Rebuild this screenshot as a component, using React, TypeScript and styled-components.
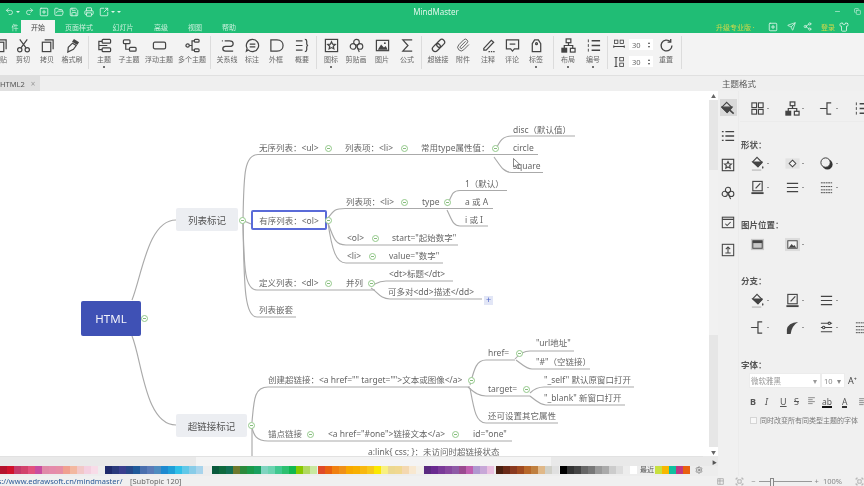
import React from "react";
import styled, { createGlobalStyle } from "styled-components";
import { Paperclip, Undo2, Redo2, SquarePlus, FolderOpen, Save, Printer, SquareArrowOutUpRight, Send, Share2, Shirt, Minus, Copy as CopyIcon, Settings } from "lucide-react";

const Global = createGlobalStyle`
  html, body { margin: 0; padding: 0; background: #fff; overflow: hidden; }
  #root { width: 864px; height: 486px; }
`;

const FONT = `"Noto Sans", "Noto Sans CJK SC", sans-serif`;

const Page = styled.div`
  width: 864px; height: 486px; display: flex; flex-direction: column; overflow: hidden;
  font-family: ${FONT}; color: #555; background: #f1f1f1; filter: blur(0.35px);
`;
const BlackBar = styled.div`height: 3px; background: #000; flex: none;`;
const TitleBar = styled.div`
  height: 17px; flex: none; background: #20bd75; display: grid; grid-template-columns: 1fr auto 1fr;
  align-items: center; color: #dff6ea;
`;
const QuickTools = styled.div`display: flex; align-items: center; gap: 5px; padding-left: 5px;`;
const Caret = styled.span`width: 0; height: 0; border-left: 2px solid transparent; border-right: 2px solid transparent; border-top: 2px solid #dff6ea; margin-left: -3px;`;
const AppName = styled.div`font-size: 8px; margin-left: 8px;`;
const WindowControls = styled.div`display: flex; justify-content: flex-end; gap: 13px; padding-right: 3px; align-items: center;`;
const TabBar = styled.div`height: 13px; flex: none; background: #20bd75; display: flex; align-items: flex-end; position: relative;`;
const MenuTab = styled.div<{ $w: number; $active?: boolean }>`
  width: ${(p) => p.$w}px; height: 13px; display: flex; align-items: center; justify-content: center; font-size: 7px; white-space: nowrap;
  color: ${(p) => (p.$active ? "#444" : "#c9f0dc")}; background: ${(p) => (p.$active ? "#f4f4f4" : "transparent")};
`;
const TabRight = styled.div`margin-left: auto; display: flex; align-items: center; height: 13px; color: #dff6ea;`;
const Upgrade = styled.span<{ $w: number }>`font-size: 7px; color: #d3d84a; width: ${(p) => p.$w}px; white-space: nowrap;`;
const Ribbon = styled.div`
  height: 43px; flex: none; background: #f3f3f3; border-bottom: 1px solid #e0e0e0; box-sizing: border-box;
  display: flex; align-items: stretch; margin-left: -8px; width: 880px;
`;
const RibbonItem = styled.div<{ $w: number }>`
  width: ${(p) => p.$w}px; flex: none; display: flex; flex-direction: column; align-items: center; padding-top: 4px; box-sizing: border-box;
`;
const IconSlot = styled.div`height: 16px; display: flex; align-items: center; justify-content: center;`;
const RibbonLabel = styled.div`margin-top: 2px; height: 10px; line-height: 10px; font-size: 7px; color: #666; white-space: nowrap;`;
const DropDot = styled.div`width: 2px; height: 2px; background: #444; margin-top: 1px; border-radius: 50%;`;
const RibbonSep = styled.div<{ $l: number; $r: number }>`
  width: 1px; height: 33px; align-self: center; margin: -3px ${(p) => p.$r}px 0 ${(p) => p.$l}px; background: #dcdcdc; flex: none;
`;
const SpaceGroup = styled.div`display: flex; flex-direction: column; gap: 6px; width: 47px; padding-top: 6px; box-sizing: border-box; margin-left: 5px; flex: none;`;
const SpaceRow = styled.div`display: flex; align-items: center; gap: 3px; height: 11px;`;
const SpaceInput = styled.div`
  width: 24px; height: 11px; background: #fff; font-size: 7.5px; color: #666; display: flex; align-items: center; justify-content: space-between;
  padding: 0 3px; box-sizing: border-box; margin-left: 1px;
`;
const Spin = styled.span`
  display: flex; flex-direction: column; gap: 2px;
  &::before, &::after { content: ""; width: 0; height: 0; border-left: 1.5px solid transparent; border-right: 1.5px solid transparent; }
  &::before { border-bottom: 2px solid #444; }
  &::after { border-top: 2px solid #444; }
`;
const DocBar = styled.div`height: 15px; flex: none; background: #efefef; display: flex; align-items: stretch;`;
const DocTab = styled.div`width: 40px; background: #e0e0e0; display: flex; align-items: center; font-size: 7.5px; color: #555; gap: 6px; padding-left: 0; box-sizing: border-box;`;
const DocClose = styled.span`color: #999; font-size: 8px;`;
const PanelTitle = styled.div`margin-left: auto; width: 142px; font-size: 8.5px; line-height: 15px; color: #555;`;
const Main = styled.div`flex: 1; min-height: 0; display: flex;`;
const LeftColumn = styled.div`width: 718px; flex: none; display: flex; flex-direction: column;`;
const CanvasRow = styled.div`height: 365px; flex: none; display: flex;`;
const Canvas = styled.div`width: 709px; background: #fff; position: relative; overflow: hidden; flex: none;`;
const Edges = styled.svg`position: absolute; inset: 0; width: 709px; height: 365px;`;
const VScroll = styled.div`width: 9px; flex: none; display: flex; flex-direction: column; background: #f0f0f0;`;
const ScrollBtn = styled.div`height: 9px; background: #fff; color: #666; font-size: 5px; display: flex; align-items: center; justify-content: center; flex: none;`;
const ScrollTrack = styled.div<{ $h: number; $dark?: boolean }>`height: ${(p) => p.$h}px; flex: none; background: ${(p) => (p.$dark ? "#e6e6e6" : "#f1f1f1")};`;
const Root = styled.div`
  position: absolute; left: 81px; top: 209.5px; width: 60px; height: 35px; background: #3f51b5; border-radius: 2px;
  color: #f2f2fa; font-size: 11.5px; display: flex; align-items: center; justify-content: center;
`;
const Topic = styled.div<{ $x: number; $y: number; $w: number }>`
  position: absolute; left: ${(p) => p.$x}px; top: ${(p) => p.$y - 91}px; width: ${(p) => p.$w}px; height: 23px; background: #eceef2; border-radius: 2px;
  font-size: 9.5px; color: #555; display: flex; align-items: center; justify-content: center; white-space: nowrap;
`;
const Selected = styled.div`
  position: absolute; left: 251px; top: 119px; width: 76px; height: 20px; box-sizing: border-box; border: 2px solid #5a6bd8; border-radius: 2px;
  font-size: 8.5px; color: #666; display: flex; align-items: center; justify-content: center; white-space: nowrap; background: #fff;
`;
const Label = styled.div<{ $x: number; $y: number }>`
  position: absolute; left: ${(p) => p.$x}px; top: ${(p) => p.$y - 91}px; transform: translateY(-50%);
  font-size: 8.5px; line-height: 12px; color: #666; white-space: nowrap;
`;
const Toggle = styled.div<{ $x: number; $y: number }>`
  position: absolute; left: ${(p) => p.$x - 3.5}px; top: ${(p) => p.$y - 91 - 3.5}px; width: 7px; height: 7px; box-sizing: border-box;
  border: 1.2px solid #93c98a; border-radius: 50%; background: #fff; display: flex; align-items: center; justify-content: center;
  &::after { content: ""; width: 3px; height: 1px; background: #86bc7c; }
`;
const AddBtn = styled.div`
  position: absolute; left: 484px; top: 205px; width: 9px; height: 9px; background: #e2e6f6; color: #4f66c8; font-size: 9px; line-height: 8px; text-align: center;
`;
const Pointer = styled.svg`position: absolute; left: 513px; top: 67px; width: 8px; height: 11px;`;
const HScroll = styled.div`height: 10px; flex: none; display: flex;`;
const HSeg = styled.div<{ $w: number; $light?: boolean }>`width: ${(p) => p.$w}px; flex: none; background: ${(p) => (p.$light ? "#f4f4f4" : "#e9e9e9")}; border-top: 1px solid #e2e2e2; box-sizing: border-box;`;
const HArrow = styled.div`width: 15px; flex: none; background: #e9e9e9; color: #555; font-size: 5px; display: flex; align-items: center; justify-content: flex-end; padding-right: 1px; box-sizing: border-box;`;
const HCorner = styled.div`flex: 1; background: #fff;`;
const Palette = styled.div`height: 10px; flex: none; background: #ededed; display: flex; align-items: flex-start;`;
const Swatch = styled.div<{ $c: string }>`width: 7px; height: 8px; background: ${(p) => p.$c}; flex: none;`;
const SwatchGap = styled.div<{ $w: number }>`width: ${(p) => p.$w}px; flex: none;`;
const RecentLabel = styled.span`font-size: 7px; line-height: 8px; color: #555; width: 15px; flex: none;`;
const Panel = styled.div`width: 146px; flex: none; display: flex; background: #f0f0f0; overflow: hidden;`;
const Rail = styled.div`width: 20px; flex: none; border-right: 1px solid #ebebeb; display: flex; flex-direction: column; align-items: center; gap: 11.5px; padding-top: 8px; box-sizing: content-box;`;
const RailBtn = styled.div<{ $active?: boolean }>`width: 17px; height: 17px; display: flex; align-items: center; justify-content: center; background: ${(p) => (p.$active ? "#d9d9d9" : "transparent")}; flex: none;`;
const PanelBody = styled.div`flex: none; width: 130px; display: flex; flex-direction: column; padding-left: 1px; box-sizing: border-box;`;
const TopTools = styled.div`height: 31px; flex: none; padding-top: 8px; box-sizing: border-box; display: flex; border-bottom: 1px solid #ebebeb; width: 140px;`;
const ToolRow = styled.div<{ $mt: number }>`height: 18px; flex: none; margin-top: ${(p) => p.$mt}px; display: flex;`;
const Tool = styled.div`width: 34.5px; height: 18px; flex: none; display: flex; align-items: center; padding-left: 10px; box-sizing: border-box; gap: 2px;`;
const ToolIcon = styled.div`width: 15px; height: 15px; flex: none; display: flex; align-items: center; justify-content: center;`;
const Dash = styled.span`width: 2px; height: 1px; background: #999; flex: none;`;
const SectionTitle = styled.div<{ $mt: number }>`height: 14px; line-height: 14px; margin-top: ${(p) => p.$mt}px; margin-left: 1px; font-size: 8.5px; font-weight: 700; color: #555; flex: none;`;
const FontRow = styled.div`display: flex; margin: 1px 0 0 9px; height: 15px; align-items: stretch; flex: none;`;
const FontName = styled.div`width: 72px; background: #fff; color: #999; font-size: 7.5px; display: flex; align-items: center; justify-content: space-between; padding: 0 3px 0 1px; box-sizing: border-box; border: 1px solid #ececec;`;
const FontSize = styled.div`width: 24px; background: #fff; color: #888; font-size: 7.5px; display: flex; align-items: center; justify-content: space-between; padding: 0 3px 0 2px; box-sizing: border-box; border: 1px solid #ececec;`;
const Grow = styled.div`font-size: 9px; color: #444; margin-left: 3px; line-height: 15px;`;
const FormatRow = styled.div`display: flex; align-items: center; height: 18px; margin: 4px 0 0 10px; flex: none; color: #555; font-size: 9px; white-space: nowrap;`;
const Fmt = styled.span<{ $w: number; $b?: boolean; $i?: boolean; $u?: boolean; $s?: boolean }>`
  width: ${(p) => p.$w}px; flex: none; font-weight: ${(p) => (p.$b ? 700 : 400)}; font-style: ${(p) => (p.$i ? "italic" : "normal")};
  text-decoration: ${(p) => (p.$u ? "underline" : p.$s ? "line-through" : "none")};
`;
const Bar = styled.span<{ $c: string }>`display: inline-block; border-bottom: 2px solid ${(p) => p.$c}; line-height: 9px; font-size: 8.5px;`;
const CheckRow = styled.div`display: flex; align-items: center; gap: 3px; margin: 3px 0 0 10px; height: 14px; flex: none; font-size: 7px; color: #777; white-space: nowrap;`;
const CheckBox = styled.span`width: 5px; height: 5px; border: 1px solid #d5d5d5; background: #f8f8f8; flex: none;`;
const Status = styled.div`height: 10px; flex: none; background: #f0f0f0; display: flex; align-items: center; font-size: 7.5px; color: #666; position: relative;`;
const StatusLink = styled.span`color: #2a5a98; margin-left: -17px; white-space: nowrap; width: 147px; flex: none;`;
const StatusText = styled.span`white-space: nowrap;`;
const Zoombar = styled.div`margin-left: auto; display: flex; align-items: center; height: 10px; color: #888; font-size: 7.5px; gap: 0;`;
const Slider = styled.div`width: 53px; height: 1px; background: #999; margin: 0 3px; position: relative; flex: none;`;
const Knob = styled.span`position: absolute; left: 11px; top: -3px; width: 2px; height: 7px; background: #f0f0f0; border: 1px solid #888;`;

const S = "#444";
const G: Record<string, React.ReactNode> = {
  scissors: <g fill="none" stroke={S} strokeWidth="1.3"><circle cx="4" cy="12.5" r="2.3" /><circle cx="12" cy="12.5" r="2.3" /><path d="M5.3 10.5L12 1.5M10.7 10.5L4 1.5" /></g>,
  copy: <g fill="none" stroke={S} strokeWidth="1.3"><rect x="2.5" y="4.5" width="9" height="10" /><path d="M5 2h9v10" /></g>,
  brush: <g><path d="M9.5 1L15 4.5 13 7.5 7.500 4z" fill={S} /><path d="M8 5.500L12 8 9 12 3 15 3.500 10z" fill="none" stroke={S} strokeWidth="1.3" /></g>,
  topic: <g fill="none" stroke={S} strokeWidth="1.3"><rect x="5.500" y="1.500" width="9" height="4" rx="1" /><rect x="5.500" y="10.500" width="9" height="4" rx="1" /><path d="M5.500 3.500H2V12.500H5.500M2 8H11" /></g>,
  sub: <g fill="none" stroke={S} strokeWidth="1.3"><rect x="1.500" y="2" width="7" height="4" rx="1" /><rect x="8" y="10" width="7" height="4" rx="1" /><path d="M4 6V12H8" /></g>,
  float: <rect x="1.500" y="4.500" width="13" height="7" rx="1.500" fill="none" stroke={S} strokeWidth="1.3" />,
  multi: <g fill="none" stroke={S} strokeWidth="1.3"><circle cx="2.800" cy="8" r="1.800" /><rect x="10" y="1.500" width="5" height="3" rx="1" /><rect x="10" y="11.500" width="5" height="3" rx="1" /><path d="M4.600 8H7.500V3H10M7.500 8V13H10" /></g>,
  relation: <path d="M2 3h1M5 3h5Q14 3 14 6Q14 9 10 9H6Q3 9 3 11.500Q3 14 6 14H14" fill="none" stroke={S} strokeWidth="1.4" />,
  note: <g fill="none" stroke={S} strokeWidth="1.3"><path d="M8 1.500a6.500 6.500 0 1 1-4.500 11.200L1.500 14l.7-3A6.500 6.500 0 0 1 8 1.500z" /><path d="M5 6.500h6M5 9.500h6" /></g>,
  outline: <path d="M2 2h6.500C13 2 15 5 15 8s-2 6-6.500 6H2z" fill="none" stroke={S} strokeWidth="1.3" />,
  summary: <g fill="none" stroke={S} strokeWidth="1.3"><path d="M1 3h7M1 8h7M1 13h7" /><path d="M10.500 1.500q2 0 2 2v3q0 1.500 1.500 1.500q-1.500 0-1.500 1.500v3q0 2-2 2" /></g>,
  iconbox: <g fill="none" stroke={S} strokeWidth="1.3"><rect x="1.500" y="1.500" width="13" height="13" /><path d="M8 4l1.200 2.600 2.800.3-2.100 1.900.6 2.700L8 10.200 5.500 11.500l.6-2.700L4 6.900l2.800-.3z" /></g>,
  clover: <g fill="none" stroke={S} strokeWidth="1.2"><circle cx="8" cy="4.500" r="3" /><circle cx="4.300" cy="9" r="3" /><circle cx="11.700" cy="9" r="3" /><path d="M8 8l3 7" /></g>,
  image: <g><rect x="1.500" y="2.500" width="13" height="11" fill="none" stroke={S} strokeWidth="1.3" /><path d="M3 12.500L6.500 7l3 3 2-1.500 2 4z" fill={S} /><circle cx="10.500" cy="5.500" r="1" fill={S} /></g>,
  sigma: <path d="M13 2H3L8.500 8 3 14H13" fill="none" stroke={S} strokeWidth="1.3" />,
  link: <g fill="none" stroke={S} strokeWidth="1.3" transform="rotate(-45 8 8)"><rect x="0" y="5" width="9.500" height="6" rx="3" /><rect x="6.500" y="5" width="9.500" height="6" rx="3" /></g>,
  annotate: <g fill="none" stroke={S} strokeWidth="1.3"><path d="M3 11L11 2.500l2.500 2L5.500 13H3z" /><path d="M8 14.500h7" strokeDasharray="1.500 1" /></g>,
  comment: <g fill="none" stroke={S} strokeWidth="1.3"><path d="M1.500 2h13v9.500h-4.500L8 14l-2-2.500H1.500z" /><path d="M5 6.500h6" /></g>,
  tag: <g fill="none" stroke={S} strokeWidth="1.3"><path d="M3.500 6L6 2h4l2.500 4v8.500h-9z" /><circle cx="8" cy="6" r="1" /></g>,
  layout: <g fill="none" stroke={S} strokeWidth="1.3"><rect x="5.500" y="1" width="5" height="4" /><rect x="1" y="11" width="5" height="4" fill={S} /><rect x="10" y="11" width="5" height="4" /><path d="M8 5v3M3.500 11V8h9v3" /></g>,
  numbering: <g fill="none" stroke={S}><path d="M6 3h9M6 8h9M6 13h9" strokeWidth="1.700" /><path d="M2.500 1.500v3M2.500 6.500v3M2.500 11.500v3" strokeWidth="1" /></g>,
  spaceH: <g fill="none" stroke={S} strokeWidth="1.100"><rect x="2" y="1.500" width="4.500" height="4.500" /><rect x="9.500" y="1.500" width="4.500" height="4.500" /><path d="M1 10h14M1 8.500v3M15 8.500v3" strokeWidth="1.400" /></g>,
  spaceV: <g fill="none" stroke={S} strokeWidth="1.100"><rect x="9" y="2" width="5" height="4.500" /><rect x="9" y="9.500" width="5" height="4.500" /><path d="M4 2v12M2 2h4M2 14h4" strokeWidth="1.400" /></g>,
  reset: <g fill="none" stroke={S} strokeWidth="1.400"><path d="M13.800 8a5.800 5.800 0 1 1-1.800-4.200" /><path d="M12.500 1v3.300H9.200" /></g>,
  bucket: <g stroke={S} strokeWidth="1.200"><path d="M7.500 1.500L13 7 8.500 11.500 3 6z" fill="none" /><path d="M3 6.500h9.500L8.500 11.500z" fill={S} /><path d="M13.800 10.500q1 1.700.4 2.500-.9.700-1.400 0-.2-1 1-2.500z" fill={S} stroke="none" /><path d="M2 15h10" stroke="#b5b5b5" strokeWidth="1.200" /></g>,
  railBucket: <g fill="none" stroke={S} strokeWidth="1.300"><path d="M6.500 1.500L12.500 7.500 7 13 1 7z" /><path d="M1 7h11.500L7 13z" fill={S} /><path d="M10 10.500l4.500 4" strokeWidth="1.800" /></g>,
  list: <g stroke={S} strokeWidth="1.500"><path d="M5 3h10M5 8h10M5 13h10" /><path d="M1 3h2M1 8h2M1 13h2" /></g>,
  grid: <g fill="none" stroke={S} strokeWidth="1.200"><rect x="2" y="2" width="5" height="5" /><rect x="9" y="2" width="5" height="5" /><rect x="2" y="9" width="5" height="5" /><rect x="9" y="9" width="5" height="5" /></g>,
  connector: <g fill="none" stroke={S} strokeWidth="1.300"><path d="M13 2H8.500V14H13M8.500 8H2" /><path d="M1 8h1" /></g>,
  diamond: <g fill="none" stroke={S} strokeWidth="1.100"><rect x="0.500" y="2.500" width="15" height="11" fill="#e2e2e2" stroke="none" /><path d="M8 4.500L11.500 8 8 11.500 4.500 8z" fill="#f5f5f5" /></g>,
  shadow: <g><circle cx="9" cy="9" r="5.500" fill="#333" /><circle cx="7" cy="7" r="5" fill="#f0f0f0" stroke="#333" /></g>,
  pen: <g fill="none" stroke={S} strokeWidth="1.200"><rect x="3" y="1.500" width="10" height="10" /><path d="M6 9l5-5.500" /><path d="M1.500 14h13" strokeWidth="2" /></g>,
  lines: <path d="M2 3.500h12M2 8h12M2 12.500h12" stroke={S} strokeWidth="1.300" />,
  dashes: <path d="M2 3h12M2 7h12M2 10.500h12M2 13.500h12" stroke={S} strokeWidth="1" strokeDasharray="2 .6" />,
  framed: <g><rect x="1" y="2" width="14" height="12" fill="#c8c8c8" /><rect x="3" y="4" width="10" height="8" fill="none" stroke={S} /><rect x="3" y="4" width="10" height="2.500" fill={S} /></g>,
  pic: <g><rect x="0" y="1" width="16" height="14" fill="#dcdcdc" /><rect x="3" y="4" width="10" height="8" fill="#f2f2f2" stroke={S} /><path d="M4 11.500l3-4 2 2 1-1 2 3z" fill={S} /></g>,
  curve: <path d="M2 15V10Q3 3 14 2Q7 6 6 15z" fill={S} />,
  sliders: <g stroke={S} strokeWidth="1.200" fill="none"><path d="M2 3.500h12M2 8h12M2 12.500h12" /><circle cx="11" cy="3.500" r="1.300" fill="#f0f0f0" /><circle cx="5" cy="8" r="1.300" fill="#f0f0f0" /></g>,
  cal: <g fill="none" stroke={S} strokeWidth="1.200"><rect x="1.500" y="2.500" width="13" height="12" /><path d="M1.500 5h13M5 10l2 2 4-4" /></g>,
  upbox: <g fill="none" stroke={S} strokeWidth="1.200"><rect x="1.500" y="1.500" width="13" height="13" /><path d="M8 4.500v7M5.500 7L8 4.500 10.500 7M5 11.500h6" /></g>,
  align: <path d="M2 3h12M2 6.500h8M2 10h12M2 13.500h8" stroke={S} strokeWidth="1" />,
  tiny: <path d="M3 3h10v10H3zM3 7h10M7 3v10" fill="none" stroke="#888" />,
  fit: <path d="M2 5V2h3M11 2h3v3M14 11v3h-3M5 14H2v-3M5 5h6v6H5z" fill="none" stroke="#888" />,
};

const Glyph: React.FC<{ n: string; s?: number }> = ({ n, s = 15 }) => (
  <svg width={s} height={s} viewBox="0 0 16 16">{G[n]}</svg>
);

type Item = { l: string; i?: string; w: number; d?: boolean; custom?: React.ReactNode };
const groups: { items: Item[]; l: number; r: number }[] = [
  { l: 0, r: 1, items: [{ l: "粘贴", i: "copy", w: 16 }, { l: "剪切", i: "scissors", w: 30 }, { l: "拷贝", i: "copy", w: 18 }, { l: "格式刷", i: "brush", w: 32 }] },
  { l: 4, r: 2, items: [{ l: "主题", i: "topic", w: 28, d: true }, { l: "子主题", i: "sub", w: 22 }, { l: "浮动主题", i: "float", w: 38 }, { l: "多个主题", i: "multi", w: 28 }] },
  { l: 1, r: 1, items: [{ l: "关系线", i: "relation", w: 28 }, { l: "标注", i: "note", w: 22 }, { l: "外框", i: "outline", w: 26 }, { l: "概要", i: "summary", w: 26 }] },
  { l: 3, r: 1, items: [{ l: "图标", i: "iconbox", w: 26, d: true }, { l: "剪贴画", i: "clover", w: 24 }, { l: "图片", i: "image", w: 28 }, { l: "公式", i: "sigma", w: 22 }] },
  { l: 2, r: 1, items: [{ l: "超链接", i: "link", w: 30 }, { l: "附件", w: 20, custom: <Paperclip size={14} strokeWidth={1.4} color={S} /> }, { l: "注释", i: "annotate", w: 30 }, { l: "评论", i: "comment", w: 18 }, { l: "标签", i: "tag", w: 30, d: true }] },
  { l: 2, r: 0, items: [{ l: "布局", i: "layout", w: 26, d: true }, { l: "编号", i: "numbering", w: 24, d: true }] },
];

const edges = [
  "M132 300C142 275 148 220 176 220", "M132 336C142 360 145 425 176 425",
  "M243 220C244 180 243 154.5 258 154.5L495 154.5", "M243 222C244 270 245 290 257 290L375 290", "M243 222C244 290 245 317 257 317L296 317", "M242 220L251 224",
  "M495 151C500 140 503 136 512 136L575 136", "M495 154.5L538 154.5", "M494 157C500 165 503 172.5 512 172.5L543 172.5",
  "M328 218C334 210 335 208.5 345 208.5L493 208.5", "M447 206C452 195 452 190.5 460 190.5L507 190.5", "M447 210C452 220 453 226 460 226L488 226",
  "M328 223C334 240 336 245 346 245L458 245", "M328 223C332 250 336 263 346 263L443 263",
  "M371 286C376 284 378 281 386 281L453 281", "M371 288C378 292 380 299 390 299L482 299",
  "M252 422C254 400 254 387 268 387L470 387", "M252 428C254 435 256 441 268 441L512 441", "M252 428L252 456",
  "M470 385C474 370 476 360 486 360L515 360", "M468 387C474 392 478 396 486 396L530 396", "M470 388C474 410 476 423 486 423L558 423",
  "M515 359C520 353 524 351 530 351L574 351", "M516 360C522 364 526 369 532 369L590 369",
  "M530 393C534 389 538 387 544 387L634 387", "M530 396C535 400 540 405 546 405L625 405",
];
const labels: [number, number, string][] = [
  [259, 148, "无序列表：<ul>"], [345, 148, "列表项：<li>"], [421, 148, "常用type属性值："], [513, 130, "disc（默认值）"], [513, 148, "circle"], [513, 166, "square"],
  [346, 202, "列表项：<li>"], [422, 202, "type"], [465, 184, "1（默认）"], [465, 202, "a 或 A"], [465, 220, "i 或 I"],
  [347, 238, "<ol>"], [392, 238, 'start="起始数字"'], [347, 256, "<li>"], [389, 256, 'value="数字"'],
  [259, 283, "定义列表：<dl>"], [346, 283, "并列"], [389, 274, "<dt>标题</dt>"], [388, 292, "可多对<dd>描述</dd>"], [259, 310, "列表嵌套"],
  [268, 380, '创建超链接：<a href="" target="">文本或图像</a>'], [488, 353, "href="], [536, 343, '"url地址"'], [536, 362, '"#"（空链接）'],
  [488, 389, "target="], [544, 380, '"_self" 默认原窗口打开'], [544, 398, '"_blank" 新窗口打开'], [488, 416, "还可设置其它属性"],
  [268, 434, "锚点链接"], [328, 434, '<a href="#one">链接文本</a>'], [473, 434, 'id="one"'], [368, 452, "a:link{ css; }：未访问时超链接状态"],
];
const toggles: [number, number][] = [[144, 318], [242, 220], [251.5, 425], [328, 148], [404, 148], [495, 148], [328, 220], [404, 202], [447, 202], [375, 238], [372, 256], [328, 283], [371, 283], [471, 380], [519, 353], [526, 389], [310, 434], [455, 434]];

const pal: { c: string[]; gap: number }[] = [
  { gap: 7, c: ["#b5122c", "#d0112b", "#c43a6a", "#d2436c", "#e2527e", "#c94da0", "#e08aa8", "#e58bab", "#e68ea6", "#f0a090", "#f3b8a0", "#f2c8c8", "#f4d0e0", "#f8dce8"] },
  { gap: 9, c: ["#1f2a6b", "#2a3a7c", "#3a3f8f", "#27488a", "#1f5a9a", "#4a6fae", "#5a7bb8", "#4e8cc0", "#1e8ad0", "#1f9fd8", "#2fbfe8", "#60c8e8", "#88cce8", "#a8d4ec"] },
  { gap: 1, c: ["#0a5a3c", "#0f6a3e", "#136f54", "#6f7a2e", "#2c8a3c", "#1a9a4a", "#19a060", "#7fd4c0", "#6ad4b0", "#40c890", "#2cc070", "#10b850", "#88c800", "#b0d860", "#c8e8a0"] },
  { gap: 1, c: ["#e04a28", "#e86010", "#f08010", "#f09018", "#f8a800", "#f8b000", "#f8b810", "#f8c818", "#fbe800", "#f8f080", "#ecd890", "#f0d890", "#f4d8b0", "#f8e8d0", "#f4f0e8"] },
  { gap: 2, c: ["#5a2a80", "#6a2a90", "#7a3a98", "#88489f", "#8e5aa6", "#9a4a90", "#c060b0", "#b098d0", "#c8a8d8", "#eabfe0"] },
  { gap: 1, c: ["#4a1f10", "#6a2a18", "#8a3a20", "#a04a20", "#b8682a", "#c08040", "#e0b888", "#d0d0c8", "#e0e0e0"] },
  { gap: 7, c: ["#000000", "#333333", "#444444", "#666666", "#777777", "#999999", "#aaaaaa", "#cccccc", "#dddddd"] },
  { gap: 3, c: ["#ffffff"] },
];
const recent = ["#c8e040", "#f8b800", "#10c0a0", "#c03880", "#e86010"];
const rail: [string, boolean?][] = [["railBucket", true], ["list"], ["iconbox"], ["clover"], ["cal"], ["upbox"]];

const ToolBtn: React.FC<{ n: string; noDash?: boolean }> = ({ n, noDash }) => (
  <Tool><ToolIcon><Glyph n={n} /></ToolIcon>{noDash ? null : <Dash />}</Tool>
);

export default function App() {
  return (
    <Page>
      <Global />
      <BlackBar />
      <TitleBar>
        <QuickTools>
          <Undo2 size={9} /><Caret /><Redo2 size={9} /><SquarePlus size={10} /><FolderOpen size={10} /><Save size={10} /><Printer size={10} /><SquareArrowOutUpRight size={10} /><Caret /><Caret />
        </QuickTools>
        <AppName>MindMaster</AppName>
        <WindowControls><Minus size={7} /><CopyIcon size={7} /></WindowControls>
      </TitleBar>
      <TabBar>
        <MenuTab $w={21}>&nbsp;&nbsp;&nbsp;&nbsp;&nbsp;件</MenuTab>
        <MenuTab $w={34} $active>开始</MenuTab>
        <MenuTab $w={48}>页面样式</MenuTab>
        <MenuTab $w={40}>幻灯片</MenuTab>
        <MenuTab $w={36}>高级</MenuTab>
        <MenuTab $w={32}>视图</MenuTab>
        <MenuTab $w={36}>帮助</MenuTab>
        <TabRight>
          <Upgrade $w={52}>升级专业版 ·</Upgrade>
          <SquarePlus size={10} style={{ marginRight: 9 }} /><Send size={9} style={{ marginRight: 7 }} /><Share2 size={9} style={{ marginRight: 9 }} />
          <Upgrade $w={16}>登录</Upgrade>
          <Shirt size={10} style={{ marginLeft: 2, marginRight: 15 }} />
        </TabRight>
      </TabBar>
      <Ribbon>
        {groups.map((g, gi) => (
          <React.Fragment key={gi}>
            {g.items.map((it) => (
              <RibbonItem $w={it.w} key={it.l}>
                <IconSlot>{it.custom ?? <Glyph n={it.i!} />}</IconSlot>
                <RibbonLabel>{it.l}</RibbonLabel>
                {it.d ? <DropDot /> : null}
              </RibbonItem>
            ))}
            <RibbonSep $l={g.l} $r={g.r} />
          </React.Fragment>
        ))}
        <SpaceGroup>
          <SpaceRow><Glyph n="spaceH" s={12} /><SpaceInput>30<Spin /></SpaceInput></SpaceRow>
          <SpaceRow><Glyph n="spaceV" s={12} /><SpaceInput>30<Spin /></SpaceInput></SpaceRow>
        </SpaceGroup>
        <RibbonItem $w={12}>
          <IconSlot><Glyph n="reset" /></IconSlot>
          <RibbonLabel>重置</RibbonLabel>
        </RibbonItem>
        <RibbonSep $l={9} $r={0} />
      </Ribbon>
      <DocBar>
        <DocTab>HTML2<DocClose>×</DocClose></DocTab>
        <PanelTitle>主题格式</PanelTitle>
      </DocBar>
      <Main>
        <LeftColumn>
          <CanvasRow>
            <Canvas>
              <Edges viewBox="0 91 709 365">
                {edges.map((d, i) => <path key={i} d={d} fill="none" stroke="#aaaaaa" strokeWidth="1.15" />)}
              </Edges>
              <Root>HTML</Root>
              <Topic $x={176} $y={208} $w={62}>列表标记</Topic>
              <Topic $x={176} $y={414} $w={71}>超链接标记</Topic>
              <Selected>有序列表：&lt;ol&gt;</Selected>
              {labels.map(([x, y, t], i) => <Label key={i} $x={x} $y={y}>{t}</Label>)}
              {toggles.map(([x, y], i) => <Toggle key={i} $x={x} $y={y} />)}
              <AddBtn>+</AddBtn>
              <Pointer viewBox="0 0 8 11"><path d="M.5.500V9L2.700 7.200 4.500 10.500 5.800 9.800 4.200 6.700H7z" fill="#fff" stroke="#555" strokeWidth=".7" /></Pointer>
            </Canvas>
            <VScroll>
              <ScrollBtn>▲</ScrollBtn>
              <ScrollTrack $h={70} $dark />
              <ScrollTrack $h={165} />
              <ScrollTrack $h={112} $dark />
              <ScrollBtn>▼</ScrollBtn>
            </VScroll>
          </CanvasRow>
          <HScroll>
            <HSeg $w={196} />
            <HSeg $w={355} $light />
            <HSeg $w={152} />
            <HArrow>▶</HArrow>
            <HCorner />
          </HScroll>
          <Palette>
            {pal.map((g, i) => (
              <React.Fragment key={i}>
                {g.c.map((c, j) => <Swatch key={j} $c={c} />)}
                <SwatchGap $w={g.gap} />
              </React.Fragment>
            ))}
            <RecentLabel>最近</RecentLabel>
            {recent.map((c) => <Swatch key={c} $c={c} />)}
            <SwatchGap $w={5} />
            <Settings size={8} color="#666" />
          </Palette>
        </LeftColumn>
        <Panel>
          <Rail>
            {rail.map(([n, a]) => <RailBtn key={n} $active={a}><Glyph n={n} s={14} /></RailBtn>)}
          </Rail>
          <PanelBody>
            <TopTools>
              <ToolBtn n="grid" /><ToolBtn n="layout" /><ToolBtn n="connector" /><ToolBtn n="numbering" />
            </TopTools>
            <SectionTitle $mt={16}>形状：</SectionTitle>
            <ToolRow $mt={2}><ToolBtn n="bucket" /><ToolBtn n="diamond" /><ToolBtn n="shadow" /></ToolRow>
            <ToolRow $mt={6}><ToolBtn n="pen" /><ToolBtn n="lines" /><ToolBtn n="dashes" /></ToolRow>
            <SectionTitle $mt={22}>图片位置：</SectionTitle>
            <ToolRow $mt={3}><ToolBtn n="framed" noDash /><ToolBtn n="pic" /></ToolRow>
            <SectionTitle $mt={21}>分支：</SectionTitle>
            <ToolRow $mt={3}><ToolBtn n="bucket" /><ToolBtn n="pen" /><ToolBtn n="lines" /></ToolRow>
            <ToolRow $mt={9}><ToolBtn n="connector" /><ToolBtn n="curve" /><ToolBtn n="sliders" /><ToolBtn n="dashes" /></ToolRow>
            <SectionTitle $mt={22}>字体：</SectionTitle>
            <FontRow>
              <FontName>微软雅黑<span>▾</span></FontName>
              <FontSize>10<span>▾</span></FontSize>
              <Grow>A⁺</Grow>
            </FontRow>
            <FormatRow>
              <Fmt $w={15} $b>B</Fmt><Fmt $w={15} $i>I</Fmt><Fmt $w={14} $u>U</Fmt><Fmt $w={13} $s>S</Fmt>
              <Fmt $w={15}><Glyph n="align" s={9} /></Fmt>
              <Fmt $w={20}><Bar $c="#111">ab</Bar></Fmt>
              <Fmt $w={16}><Bar $c="#333">A</Bar></Fmt>
              <Glyph n="align" s={9} />
            </FormatRow>
            <CheckRow><CheckBox />同时改变所有同类型主题的字体</CheckRow>
          </PanelBody>
        </Panel>
      </Main>
      <Status>
        <StatusLink>https://www.edrawsoft.cn/mindmaster/</StatusLink>
        <StatusText>[SubTopic 120]</StatusText>
        <Zoombar>
          <Glyph n="tiny" s={9} />
          <SwatchGap $w={10} />
          <Glyph n="fit" s={9} />
          <SwatchGap $w={7} />
          <span>−</span>
          <Slider><Knob /></Slider>
          <span>+</span>
          <SwatchGap $w={4} />
          <span>100%</span>
          <SwatchGap $w={13} />
          <Glyph n="fit" s={9} />
        </Zoombar>
      </Status>
    </Page>
  );
}
